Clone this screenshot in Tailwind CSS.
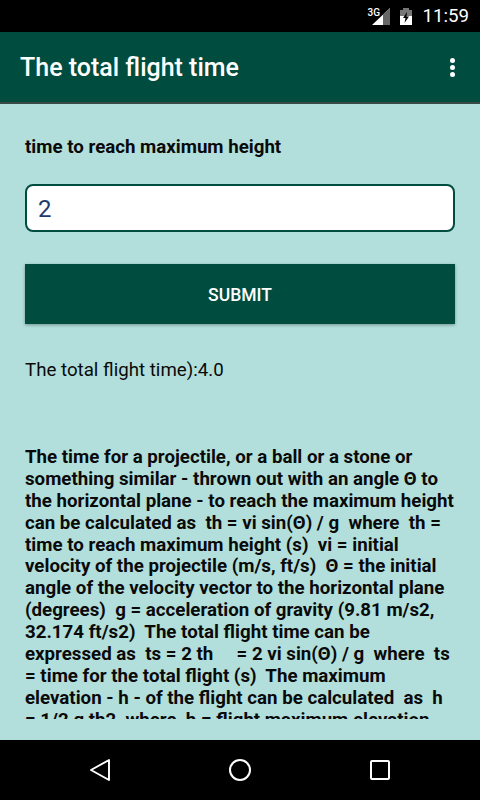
<!DOCTYPE html>
<html lang="en">
<head>
    <meta charset="UTF-8">
    <meta name="viewport" content="width=device-width, initial-scale=1.0">
    <title>The total flight time</title>
    <script src="https://cdn.jsdelivr.net/npm/@tailwindcss/browser@4"></script>
</head>
<body class="w-[480px] h-[800px] overflow-hidden flex flex-col bg-[#b2dfdb] font-['Roboto',sans-serif]">

    <!-- status bar -->
    <div class="h-8 shrink-0 bg-black flex items-center justify-end text-white">
        <div class="relative w-[18px] h-[17px] mr-[10px]">
            <span class="absolute left-[-5px] top-0 text-[10px] leading-[9px] font-medium">3G</span>
            <svg class="absolute inset-0" width="18" height="17" viewBox="0 0 18 17">
                <path d="M0 17 L18 0 V17 Z" fill="#fff"/>
                <path d="M11 6.6 L18 0 V17 H11 Z" fill="#666"/>
            </svg>
        </div>
        <svg class="mr-[10px]" width="12" height="17" viewBox="0 0 12 17">
            <path d="M3 0 H9 V2 H12 V17 H0 V2 H3 Z" fill="#fff"/>
            <path d="M3 0 H9 V2 H12 V8 H0 V2 H3 Z" fill="#777"/>
            <path d="M7 4 L3 10 H5.5 L4.5 15 L9 8.5 H6.5 Z" fill="#000"/>
        </svg>
        <span class="text-[18.7px] mr-[11px]">11:59</span>
    </div>

    <!-- action bar -->
    <div class="h-[72px] shrink-0 bg-[#004d40] border-b-2 border-[#3a4a47] flex items-center justify-between">
        <h1 class="ml-5 mt-[2px] text-[25px] font-medium text-white">The total flight time</h1>
        <div class="flex flex-col gap-[2px] mr-[25px]">
            <span class="w-[5px] h-[5px] rounded-full bg-white"></span>
            <span class="w-[5px] h-[5px] rounded-full bg-white"></span>
            <span class="w-[5px] h-[5px] rounded-full bg-white"></span>
        </div>
    </div>

    <!-- content -->
    <main class="flex-1 min-h-0 overflow-hidden px-[25px] flex flex-col">
        <p class="mt-[31px] text-[18.7px] leading-[24px] font-bold text-[#0a0a0a]">time to reach maximum height</p>
        <div class="mt-[25px] h-[48px] shrink-0 bg-white border-2 border-[#004d40] rounded-[8px] flex items-center px-[11px] pt-[1px] text-[24px] text-[#1f3a6e]">2</div>
        <button class="mt-[32px] h-[60px] shrink-0 bg-[#004d40] text-white text-[17.5px] font-medium shadow-[0_1px_3px_rgba(0,0,0,0.35)] pt-[2px]">SUBMIT</button>
        <p class="mt-[34px] text-[18.7px] leading-[24px] text-[#0a0a0a]">The total flight time):4.0</p>
        <p class="mt-[65px] h-[272px] shrink-0 overflow-hidden text-[18.7px] leading-[21.88px] font-bold text-[#0a0a0a]">The time for a projectile, or a ball or a stone or something similar - thrown out with an angle Θ to the horizontal plane - to reach the maximum height can be calculated as&nbsp; th = vi sin(Θ) / g&nbsp; where&nbsp; th = time to reach maximum height (s)&nbsp; vi = initial velocity of the projectile (m/s, ft/s)&nbsp; Θ = the initial angle of the velocity vector to the horizontal plane (degrees)&nbsp; g = acceleration of gravity (9.81 m/s2, 32.174 ft/s2)&nbsp; The total flight time can be expressed as&nbsp; ts = 2 th &nbsp; &nbsp; = 2 vi sin(Θ) / g&nbsp; where&nbsp; ts = time for the total flight (s)&nbsp; The maximum elevation - h - of the flight can be calculated&nbsp; as&nbsp; h = 1/2 g th2&nbsp; where&nbsp; h = flight maximum elevation</p>
    </main>

    <!-- nav bar -->
    <div class="h-[60px] shrink-0 bg-black flex items-center justify-between pl-[90px] pr-[90px]">
        <svg width="20" height="22" viewBox="0 0 20 22" fill="none" stroke="#fff" stroke-width="1.9" stroke-linejoin="round"><path d="M19 1 V21 L1 11 Z"/></svg>
        <svg width="22" height="22" viewBox="0 0 22 22" fill="none" stroke="#fff" stroke-width="2"><circle cx="11" cy="11" r="10"/></svg>
        <svg width="20" height="20" viewBox="0 0 20 20" fill="none" stroke="#fff" stroke-width="2" stroke-linejoin="round"><rect x="1" y="1" width="18" height="18" rx="1"/></svg>
    </div>

</body>
</html>
